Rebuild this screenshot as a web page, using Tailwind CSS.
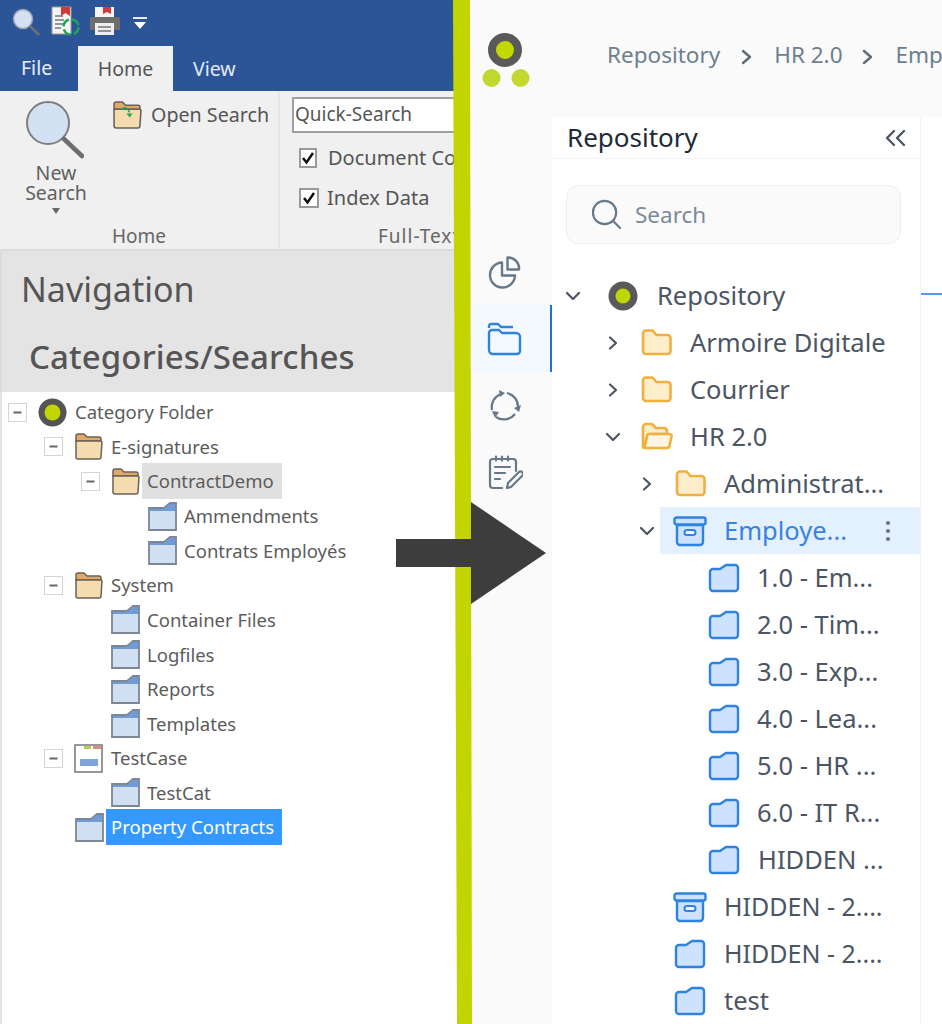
<!DOCTYPE html>
<html lang="en">
  <head>
    <meta charset="UTF-8" />
    <meta name="viewport" content="width=device-width, initial-scale=1.0" />
    <title>Repository</title>
    <script src="https://cdn.jsdelivr.net/npm/@tailwindcss/browser@4"></script>
  </head>
  <body class="bg-white">
    <!-- shared icons -->
    <svg class="hidden">
      <defs>
        <linearGradient id="box-shade" x1="0" y1="0" x2="0.600" y2="1">
          <stop offset="0" stop-color="#ffffff" />
          <stop offset="1" stop-color="#cfcfcf" />
        </linearGradient>
      </defs>
      <symbol id="old-tan" viewBox="0 0 29 29">
        <path d="M2 9V4q0-2 2-2h6l3 3h12q2 0 2 2v2z" fill="#e2a868" stroke="#6b6257" stroke-width="1.500" />
        <path d="M2 9h25l1 1-1 15q0 2-2 2H4q-2 0-2-2z" fill="#f4dcb0" stroke="#6b6257" stroke-width="1.500" />
      </symbol>
      <symbol id="old-blue" viewBox="0 0 29 29">
        <path d="M1 7h15l6-5h6v7H1z" fill="#6f9bd8" />
        <path d="M1 9h27v19H1z" fill="#d0dff2" />
        <path d="M1 28V6h15l6-5h6v27z" fill="none" stroke="#7d8694" stroke-width="1.800" />
      </symbol>
      <symbol id="minus-box" viewBox="0 0 19 19">
        <rect x="0.500" y="0.500" width="18" height="18" fill="url(#box-shade)" stroke="#d4d4d4" />
        <rect x="5.500" y="8.500" width="8" height="2" fill="#666666" />
      </symbol>
      <symbol id="y-folder" viewBox="0 0 32 32">
        <path d="M2 6.500a3 3 0 0 1 3-3h6.500l4 4.500h11a3 3 0 0 1 3 3v13a3 3 0 0 1-3 3H5a3 3 0 0 1-3-3z" fill="#fdeecb" stroke="#f0b040" stroke-width="2.600" stroke-linejoin="round" />
      </symbol>
      <symbol id="y-open" viewBox="0 0 32 32">
        <path d="M2 25V6a3 3 0 0 1 3-3h6l4 4h8a3 3 0 0 1 3 3v3H9a3 3 0 0 0-3 2.500L4 27a2 2 0 0 1-2-2z" fill="#fdeecb" stroke="#f0b040" stroke-width="2.600" stroke-linejoin="round" />
        <path d="M6 15.500a2.500 2.500 0 0 1 2.500-2.500h20a2 2 0 0 1 2 2.500l-2 9.500a3 3 0 0 1-3 2H4a2 2 0 0 1-0.500 0z" fill="#fff6e2" stroke="#f0b040" stroke-width="2.600" stroke-linejoin="round" />
      </symbol>
      <symbol id="b-folder" viewBox="0 0 32 32">
        <path d="M2 10a3 3 0 0 1 3-3h7l6-4h9a3 3 0 0 1 3 3v20a3 3 0 0 1-3 3H5a3 3 0 0 1-3-3z" fill="#cde3fd" stroke="#2f83df" stroke-width="2.400" stroke-linejoin="round" />
      </symbol>
      <symbol id="b-box" viewBox="0 0 34 32">
        <path d="M4 10h26v17a3 3 0 0 1-3 3H7a3 3 0 0 1-3-3z" fill="#cde3fd" stroke="#2f83df" stroke-width="2.400" />
        <rect x="1.500" y="2.500" width="31" height="7" rx="2" fill="#cde3fd" stroke="#2f83df" stroke-width="2.400" />
        <rect x="11.500" y="15" width="11" height="5" rx="2.500" fill="#ffffff" stroke="#2f83df" stroke-width="2" />
      </symbol>
      <symbol id="chev-r" viewBox="0 0 20 20">
        <path d="M7 4.500l6 5.500-6 5.500" fill="none" stroke="#4b5563" stroke-width="2.200" stroke-linecap="round" stroke-linejoin="round" />
      </symbol>
      <symbol id="chev-d" viewBox="0 0 20 20">
        <path d="M4 7l6 6 6-6" fill="none" stroke="#4b5563" stroke-width="2.200" stroke-linecap="round" stroke-linejoin="round" />
      </symbol>
    </svg>

    <div class="relative flex w-[942px] h-[1024px] overflow-hidden">
      <!-- old client -->
      <div class="w-[456px] shrink-0 overflow-hidden font-['Noto_Sans',sans-serif] text-[#555555]">
        <div class="h-[91px] bg-[#2b5597]">
          <div class="flex items-center h-[46px] pl-[10px]">
            <svg width="30" height="30" viewBox="0 0 30 30" class="mt-[-3px]">
              <circle cx="13" cy="12" r="9.500" fill="#d4e1f3" stroke="#9aa3ad" stroke-width="1.500" />
              <path d="M20 19l9 9" stroke="#6f6f6f" stroke-width="2.500" />
            </svg>
            <svg width="32" height="32" viewBox="0 0 32 32" class="ml-[10px] mt-[-3px]">
              <path d="M2 1h19v27H2z" fill="#f4f4f4" stroke="#9c9c9c" />
              <path d="M11 1h9v9l-4.500-3L11 10z" fill="#d23a3a" />
              <path d="M5 10h8M5 14h9M5 18h8M5 22h6" stroke="#777777" stroke-width="1.500" />
              <circle cx="21" cy="21" r="7.500" fill="none" stroke="#1fa55a" stroke-width="2.500" stroke-dasharray="9 3" />
            </svg>
            <svg width="32" height="32" viewBox="0 0 32 32" class="ml-[7px] mt-[-3px]">
              <path d="M6 1h19v10H6z" fill="#f4f4f4" />
              <path d="M14 1h8v7l-4-2-4 2z" fill="#d23a3a" />
              <path d="M3 11h26q2 0 2 2v11H1V13q0-2 2-2z" fill="#6d6d6d" />
              <path d="M6 17h19v12H6z" fill="#eeeeee" />
              <path d="M9 21h13M9 25h13" stroke="#777777" stroke-width="1.500" />
            </svg>
            <svg width="14" height="14" viewBox="0 0 14 14" class="ml-[12px]">
              <path d="M0 1h14v2H0z" fill="#e8edf5" />
              <path d="M1 6h12L7 13z" fill="#ffffff" />
            </svg>
          </div>
          <div class="flex items-end h-[45px] text-[19.500px] text-white">
            <div class="w-[78px] h-[45px] leading-[43px] pl-[21px] text-[#e9eef6]">File</div>
            <div class="w-[95px] h-[45px] leading-[46px] text-center bg-[#f0f0f0] text-[#555555]">Home</div>
            <div class="h-[45px] leading-[46px] pl-[20px] text-[#e3e9f3]">View</div>
          </div>
        </div>

        <div class="flex h-[160px] bg-[#f0f0f0] border-b-2 border-[#dcdcdc] text-[20px]">
          <div class="flex flex-col w-[280px] shrink-0 border-r-2 border-[#e6e6e6]">
            <div class="flex flex-1">
              <div class="flex flex-col items-center w-[112px] pt-[8px]">
                <svg width="62" height="62" viewBox="0 0 62 62" class="ml-[-7px]">
                  <circle cx="26" cy="24" r="21" fill="#d4e1f3" stroke="#7d7d7d" stroke-width="2" />
                  <path d="M42 40l18 17" stroke="#6d6d6d" stroke-width="4.500" stroke-linecap="round" />
                </svg>
                <div class="leading-[20px] text-center text-[#606060] text-[19.500px] mt-[2px]">New<br />Search</div>
                <svg width="10" height="6" viewBox="0 0 10 6" class="mt-[5px]"><path d="M1 0h8L5 6z" fill="#666666" /></svg>
              </div>
              <div class="flex items-start pt-[9px]">
                <svg width="30" height="30" viewBox="0 0 29 29" class="shrink-0">
                  <use href="#old-tan" />
                  <path d="M9 9q5-4 8 3" fill="none" stroke="#1fa55a" stroke-width="1.500" />
                  <path d="M14 13h6l-3 4z" fill="#1fa55a" />
                </svg>
                <span class="ml-[9px] text-[19.700px] leading-[30px] whitespace-nowrap">Open Search</span>
              </div>
            </div>
            <div class="h-[30px] leading-[34px] text-center text-[19px] text-[#666666]">Home</div>
          </div>
          <div class="flex flex-col flex-1 min-w-0">
            <div class="flex-1 pt-[6px] pl-[12px]">
              <div class="h-[36px] leading-[31px] pl-[1px] bg-white border-2 border-[#a0a0a0] border-r-0 text-[19px]">Quick-Search</div>
              <div class="flex items-center mt-[15px] ml-[7px] h-[20px]">
                <span class="flex items-center justify-center w-[20px] h-[20px] bg-white border-2 border-[#9a9a9a]">
                  <svg width="14" height="14" viewBox="0 0 14 14"><path d="M2 7l3.500 4.500L12 2" fill="none" stroke="#111111" stroke-width="2.500" /></svg>
                </span>
                <span class="ml-[11px] whitespace-nowrap">Document Content</span>
              </div>
              <div class="flex items-center mt-[20px] ml-[7px] h-[20px]">
                <span class="flex items-center justify-center w-[20px] h-[20px] bg-white border-2 border-[#9a9a9a]">
                  <svg width="14" height="14" viewBox="0 0 14 14"><path d="M2 7l3.500 4.500L12 2" fill="none" stroke="#111111" stroke-width="2.500" /></svg>
                </span>
                <span class="ml-[8px]">Index Data</span>
              </div>
            </div>
            <div class="h-[30px] leading-[34px] pl-[98px] text-[19px] tracking-[1px] text-[#666666] whitespace-nowrap">Full-Text</div>
          </div>
        </div>

        <div class="h-[141px] bg-[#e4e4e4] border-l-2 border-[#dcdcdc] text-[#555555]">
          <div class="pt-[15px] pl-[19px] text-[34px] leading-[46px]">Navigation</div>
          <div class="pt-[22px] pl-[27px] text-[33px] tracking-[0.100px] leading-[46px] font-medium whitespace-nowrap">Categories/Searches</div>
        </div>

        <div class="h-[632px] border-l-2 border-[#e4e4e4] pt-[3px] text-[18.500px] text-[#5c5c5c]">
          <div class="flex items-center h-[34.600px] pl-[6px]">
            <svg width="19" height="19" class="shrink-0"><use href="#minus-box" /></svg>
            <svg width="29" height="29" viewBox="0 0 29 29" class="ml-[11px]"><circle cx="14.500" cy="14.500" r="14" fill="#555555" /><circle cx="14.500" cy="14.500" r="8" fill="#bfd600" /></svg>
            <span class="ml-[3px] px-[5px]">Category Folder</span>
          </div>
          <div class="flex items-center h-[34.600px] pl-[42px]">
            <svg width="19" height="19" class="shrink-0"><use href="#minus-box" /></svg>
            <svg width="29" height="29" class="ml-[11px]"><use href="#old-tan" /></svg>
            <span class="ml-[3px] px-[5px]">E-signatures</span>
          </div>
          <div class="flex items-center h-[34.600px] pl-[79px]">
            <svg width="19" height="19" class="shrink-0"><use href="#minus-box" /></svg>
            <svg width="29" height="29" class="ml-[11px]"><use href="#old-tan" /></svg>
            <span class="ml-[2px] h-[36px] leading-[36px] w-[140px] pl-[5px] bg-[#e0e0e0]">ContractDemo</span>
          </div>
          <div class="flex items-center h-[34.600px] pl-[146px]">
            <svg width="29" height="29"><use href="#old-blue" /></svg>
            <span class="ml-[2px] px-[5px]">Ammendments</span>
          </div>
          <div class="flex items-center h-[34.600px] pl-[146px]">
            <svg width="29" height="29"><use href="#old-blue" /></svg>
            <span class="ml-[2px] px-[5px]">Contrats Employés</span>
          </div>
          <div class="flex items-center h-[34.600px] pl-[42px]">
            <svg width="19" height="19" class="shrink-0"><use href="#minus-box" /></svg>
            <svg width="29" height="29" class="ml-[11px]"><use href="#old-tan" /></svg>
            <span class="ml-[3px] px-[5px]">System</span>
          </div>
          <div class="flex items-center h-[34.600px] pl-[109px]">
            <svg width="29" height="29"><use href="#old-blue" /></svg>
            <span class="ml-[2px] px-[5px]">Container Files</span>
          </div>
          <div class="flex items-center h-[34.600px] pl-[109px]">
            <svg width="29" height="29"><use href="#old-blue" /></svg>
            <span class="ml-[2px] px-[5px]">Logfiles</span>
          </div>
          <div class="flex items-center h-[34.600px] pl-[109px]">
            <svg width="29" height="29"><use href="#old-blue" /></svg>
            <span class="ml-[2px] px-[5px]">Reports</span>
          </div>
          <div class="flex items-center h-[34.600px] pl-[109px]">
            <svg width="29" height="29"><use href="#old-blue" /></svg>
            <span class="ml-[2px] px-[5px]">Templates</span>
          </div>
          <div class="flex items-center h-[34.600px] pl-[42px]">
            <svg width="19" height="19" class="shrink-0"><use href="#minus-box" /></svg>
            <svg width="29" height="29" viewBox="0 0 29 29" class="ml-[11px]">
              <path d="M1 1h27v27H1z" fill="#ffffff" stroke="#777777" stroke-width="1.500" />
              <path d="M10 2h7v3h-7z" fill="#b9c95a" />
              <path d="M19 2h8v3h-8z" fill="#e08a7a" />
              <path d="M6 15h18v7H6z" fill="#7fa5dc" />
            </svg>
            <span class="ml-[3px] px-[5px]">TestCase</span>
          </div>
          <div class="flex items-center h-[34.600px] pl-[109px]">
            <svg width="29" height="29"><use href="#old-blue" /></svg>
            <span class="ml-[2px] px-[5px]">TestCat</span>
          </div>
          <div class="flex items-center h-[34.600px] pl-[73px]">
            <svg width="29" height="29"><use href="#old-blue" /></svg>
            <span class="ml-[2px] h-[36px] leading-[36px] w-[176px] pl-[5px] bg-[#3399ff] text-white">Property Contracts</span>
          </div>
        </div>
      </div>

      <!-- new client -->
      <div class="ml-[15px] flex-1 min-w-0 bg-[#fafafa] font-['Noto_Sans',sans-serif]">
        <div class="flex h-[117px]">
          <div class="w-[81px] shrink-0 flex justify-center pt-[33px]">
            <svg width="50" height="56" viewBox="0 0 50 56" class="ml-[-14px]">
              <circle cx="25" cy="17" r="13" fill="#c2d800" stroke="#5a5a5a" stroke-width="8" />
              <circle cx="11.500" cy="45" r="9" fill="#c2d82e" />
              <circle cx="40.500" cy="45" r="9" fill="#c2d82e" />
            </svg>
          </div>
          <div class="flex items-start pt-[38px] text-[22.500px] leading-[34px] text-[#6c7f90] whitespace-nowrap">
            <span class="ml-[55px]">Repository</span>
            <svg width="20" height="20" viewBox="0 0 20 20" class="ml-[17px] mt-[9px]"><path d="M6 4l7 6-7 6" fill="none" stroke="#5f6b76" stroke-width="2.400" stroke-linecap="round" stroke-linejoin="round" /></svg>
            <span class="ml-[17px]">HR 2.0</span>
            <svg width="20" height="20" viewBox="0 0 20 20" class="ml-[15px] mt-[9px]"><path d="M6 4l7 6-7 6" fill="none" stroke="#5f6b76" stroke-width="2.400" stroke-linecap="round" stroke-linejoin="round" /></svg>
            <span class="ml-[18px]">Employees</span>
          </div>
        </div>

        <div class="flex h-[907px]">
          <div class="w-[81px] shrink-0 pt-[121px]">
            <div class="flex items-center justify-center h-[67px] pr-[14px]">
              <svg width="34" height="34" viewBox="0 0 34 34" fill="none" stroke="#66788a" stroke-width="2.400" stroke-linejoin="round">
                <path d="M14 7.500a12.500 12.500 0 1 0 13 13H14z" />
                <path d="M19.500 2.500a11 11 0 0 1 11.500 12H19.500z" />
              </svg>
            </div>
            <div class="flex items-center justify-center h-[67px] pr-[11px] bg-[#f4f9ff] border-r-[2px] border-[#1a73d8]">
              <svg width="36" height="36" viewBox="0 0 36 36" fill="none" stroke="#2f83df" stroke-width="2.400" stroke-linejoin="round">
                <path d="M2 7V5a2 2 0 0 1 2-2h7l3 3h12" />
                <path d="M2 12a3 3 0 0 1 3-3h7l3 3h14a4 4 0 0 1 4 4v14a3 3 0 0 1-3 3H6a4 4 0 0 1-4-4z" />
              </svg>
            </div>
            <div class="flex items-center justify-center h-[67px] pr-[14px]">
              <svg width="34" height="34" viewBox="0 0 34 34" fill="none" stroke="#66788a" stroke-width="2.200">
                <path d="M4 21a14 14 0 0 1 9-16" />
                <path d="M19 4a14 14 0 0 1 11 14" />
                <path d="M27 25a14 14 0 0 1-19 3" />
                <path d="M11 1l6 3-5 4zM33 16l-2 7-5-4zM4 22l7 1-4 6z" fill="#66788a" stroke="none" />
              </svg>
            </div>
            <div class="flex items-center justify-center h-[67px] pr-[14px]">
              <svg width="36" height="36" viewBox="0 0 36 36" fill="none" stroke="#66788a" stroke-width="2.200" stroke-linecap="round" stroke-linejoin="round">
                <path d="M15 33H6a3 3 0 0 1-3-3V7a3 3 0 0 1 3-3h20a3 3 0 0 1 3 3v9" />
                <path d="M9 1.500v4M15 1.500v4M21 1.500v4M8 12h15M8 18h10M8 24h5" />
                <path d="M20 33l1-5 11-11a2.500 2.500 0 0 1 3.500 3.500L24 32z" />
              </svg>
            </div>
          </div>

          <div class="w-[369px] shrink-0 bg-white border-r border-[#f2f2f2]">
            <div class="flex items-center justify-between h-[42px] pl-[15px] pr-[12px] border-b border-[#f4f4f4]">
              <span class="text-[26px] text-[#1f2937]">Repository</span>
              <svg width="24" height="20" viewBox="0 0 24 20" fill="none" stroke="#4b5563" stroke-width="2.400" stroke-linecap="round" stroke-linejoin="round">
                <path d="M10 3l-7 7 7 7M20 3l-7 7 7 7" />
              </svg>
            </div>
            <div class="flex items-center h-[59px] w-[335px] mt-[26px] ml-[14px] pl-[24px] bg-[#fafafa] border border-[#eeeeee] rounded-[12px]">
              <svg width="31" height="31" viewBox="0 0 32 32" fill="none" stroke="#66788a" stroke-width="2.200" stroke-linecap="round">
                <circle cx="14" cy="14" r="12" />
                <path d="M23 23l7 7" />
              </svg>
              <span class="ml-[13px] text-[22.500px] text-[#7b8a98]">Search</span>
            </div>

            <div class="mt-[28px] text-[25.500px] text-[#4b5563] whitespace-nowrap">
              <div class="flex items-center h-[47px] pl-[11px]">
                <svg width="20" height="20" class="shrink-0"><use href="#chev-d" /></svg>
                <svg width="30" height="30" viewBox="0 0 30 30" class="ml-[25px]"><circle cx="15" cy="15" r="11" fill="#bfd600" stroke="#5a5a5a" stroke-width="7" /></svg>
                <span class="ml-[19px]">Repository</span>
              </div>
              <div class="flex items-center h-[47px] pl-[51px]">
                <svg width="20" height="20" class="shrink-0"><use href="#chev-r" /></svg>
                <svg width="32" height="32" class="ml-[18px]"><use href="#y-folder" /></svg>
                <span class="ml-[17px]">Armoire Digitale</span>
              </div>
              <div class="flex items-center h-[47px] pl-[51px]">
                <svg width="20" height="20" class="shrink-0"><use href="#chev-r" /></svg>
                <svg width="32" height="32" class="ml-[18px]"><use href="#y-folder" /></svg>
                <span class="ml-[17px]">Courrier</span>
              </div>
              <div class="flex items-center h-[47px] pl-[51px]">
                <svg width="20" height="20" class="shrink-0"><use href="#chev-d" /></svg>
                <svg width="32" height="32" class="ml-[18px]"><use href="#y-open" /></svg>
                <span class="ml-[17px]">HR 2.0</span>
              </div>
              <div class="flex items-center h-[47px] pl-[85px]">
                <svg width="20" height="20" class="shrink-0"><use href="#chev-r" /></svg>
                <svg width="32" height="32" class="ml-[18px]"><use href="#y-folder" /></svg>
                <span class="ml-[17px]">Administrat...</span>
              </div>
              <div class="flex items-center h-[47px] pl-[85px]">
                <svg width="20" height="20" class="shrink-0"><use href="#chev-d" /></svg>
                <div class="flex items-center flex-1 h-[47px] ml-[3px] pl-[13px] bg-[#e3f0fd] text-[#3b82e0]">
                  <svg width="34" height="32" class="shrink-0"><use href="#b-box" /></svg>
                  <span class="ml-[17px]">Employe...</span>
                  <svg width="6" height="24" viewBox="0 0 6 24" class="ml-auto mr-[29px]" fill="#6b7280">
                    <circle cx="3" cy="4" r="2" /><circle cx="3" cy="12" r="2" /><circle cx="3" cy="20" r="2" />
                  </svg>
                </div>
              </div>
              <div class="flex items-center h-[47px] pl-[156px]">
                <svg width="32" height="32"><use href="#b-folder" /></svg>
                <span class="ml-[17px]">1.0 - Em...</span>
              </div>
              <div class="flex items-center h-[47px] pl-[156px]">
                <svg width="32" height="32"><use href="#b-folder" /></svg>
                <span class="ml-[17px]">2.0 - Tim...</span>
              </div>
              <div class="flex items-center h-[47px] pl-[156px]">
                <svg width="32" height="32"><use href="#b-folder" /></svg>
                <span class="ml-[17px]">3.0 - Exp...</span>
              </div>
              <div class="flex items-center h-[47px] pl-[156px]">
                <svg width="32" height="32"><use href="#b-folder" /></svg>
                <span class="ml-[17px]">4.0 - Lea...</span>
              </div>
              <div class="flex items-center h-[47px] pl-[156px]">
                <svg width="32" height="32"><use href="#b-folder" /></svg>
                <span class="ml-[17px]">5.0 - HR ...</span>
              </div>
              <div class="flex items-center h-[47px] pl-[156px]">
                <svg width="32" height="32"><use href="#b-folder" /></svg>
                <span class="ml-[17px]">6.0 - IT R...</span>
              </div>
              <div class="flex items-center h-[47px] pl-[156px]">
                <svg width="32" height="32"><use href="#b-folder" /></svg>
                <span class="ml-[18px]">HIDDEN ...</span>
              </div>
              <div class="flex items-center h-[47px] pl-[121px]">
                <svg width="34" height="32" class="shrink-0"><use href="#b-box" /></svg>
                <span class="ml-[17px] text-[25px]">HIDDEN - 2....</span>
              </div>
              <div class="flex items-center h-[47px] pl-[122px]">
                <svg width="32" height="32"><use href="#b-folder" /></svg>
                <span class="ml-[18px] text-[25px]">HIDDEN - 2....</span>
              </div>
              <div class="flex items-center h-[47px] pl-[122px]">
                <svg width="32" height="32"><use href="#b-folder" /></svg>
                <span class="ml-[18px]">test</span>
              </div>
            </div>
          </div>

          <div class="flex-1 bg-white pt-[176px]">
            <div class="h-[2px] bg-[#5b9be6]"></div>
          </div>
        </div>
      </div>

      <!-- slanted green divider and the arrow lie over both clients -->
      <svg width="942" height="1024" viewBox="0 0 942 1024" class="absolute inset-0 pointer-events-none">
        <path d="M453 0h17l2 1024h-15z" fill="#c3d500" />
        <path d="M396 539h75v-37l75 51-75 51v-37h-75z" fill="#3d3d3d" />
      </svg>
    </div>
  </body>
</html>
